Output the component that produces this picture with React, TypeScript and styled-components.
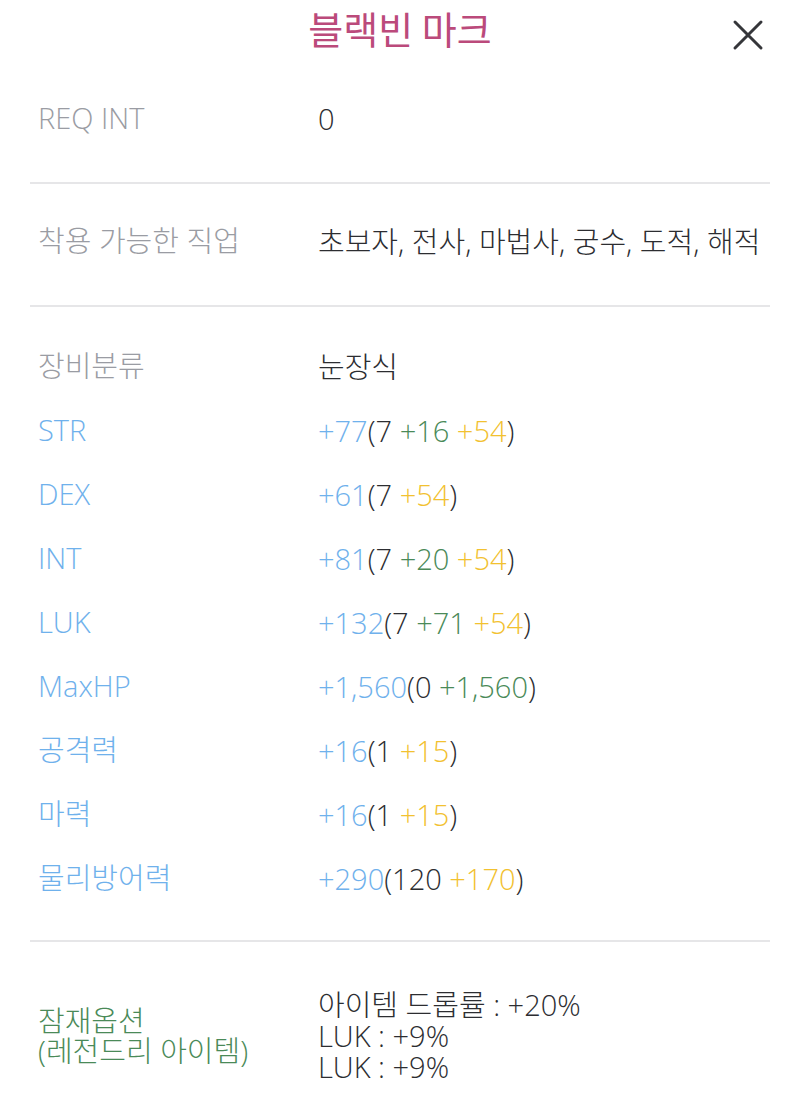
import React from "react";
import styled, { createGlobalStyle } from "styled-components";

const Global = createGlobalStyle`
  html, body { margin: 0; padding: 0; background: #ffffff; }
  body { font-family: "Open Sans", "Noto Sans CJK KR", sans-serif; -webkit-font-smoothing: antialiased; }
`;

const Page = styled.div`
  width: 800px;
  min-height: 1114px;
  box-sizing: border-box;
  padding: 0 30px;
  background: #fff;
`;

const Header = styled.header`
  position: relative;
  height: 61px;
  display: flex;
  align-items: center;
  justify-content: center;
`;

const Title = styled.h1`
  margin: 0 0 6px;
  font-family: "Noto Sans CJK KR", sans-serif;
  font-size: 38px;
  font-weight: 400;
  color: #bb4a7b;
  line-height: 1;
`;

const Close = styled.button`
  position: absolute;
  right: 4px;
  top: 17px;
  width: 36px;
  height: 36px;
  padding: 0;
  border: 0;
  background: transparent;
  display: flex;
  align-items: center;
  justify-content: center;
  cursor: pointer;
`;

const Section = styled.section<{ $top: number; $bottom: number; $last?: boolean }>`
  padding: ${(p) => p.$top}px 0 ${(p) => p.$bottom}px;
  border-bottom: ${(p) => (p.$last ? "none" : "2px solid #e6e6e8")};
`;

const Row = styled.div<{ $h?: number }>`
  display: grid;
  grid-template-columns: 280px 1fr;
  align-items: center;
  padding-left: 8px;
  min-height: ${(p) => p.$h ?? 64}px;
  font-size: 29px;
  font-weight: 300;
  white-space: nowrap;
`;

const Label = styled.div<{ $tone: "grey" | "blue" | "green" }>`
  color: ${(p) =>
    p.$tone === "grey" ? "#9a9ca3" : p.$tone === "blue" ? "#6fb1ec" : "#4a8a58"};
  line-height: 30px;
`;

const Value = styled.div`
  color: #2c2d31;
  line-height: 31px;
`;

const Tone = styled.span<{ $c: "blue" | "green" | "yellow" | "dark" }>`
  color: ${(p) =>
    p.$c === "blue"
      ? "#6fb1ec"
      : p.$c === "green"
      ? "#4a8a58"
      : p.$c === "yellow"
      ? "#f2c130"
      : "#2c2d31"};
`;

type Part = { t: string; c: "blue" | "green" | "yellow" | "dark" };

const stats: { label: string; parts: Part[] }[] = [
  { label: "STR", parts: [{ t: "+77", c: "blue" }, { t: "(7 ", c: "dark" }, { t: "+16 ", c: "green" }, { t: "+54", c: "yellow" }, { t: ")", c: "dark" }] },
  { label: "DEX", parts: [{ t: "+61", c: "blue" }, { t: "(7 ", c: "dark" }, { t: "+54", c: "yellow" }, { t: ")", c: "dark" }] },
  { label: "INT", parts: [{ t: "+81", c: "blue" }, { t: "(7 ", c: "dark" }, { t: "+20 ", c: "green" }, { t: "+54", c: "yellow" }, { t: ")", c: "dark" }] },
  { label: "LUK", parts: [{ t: "+132", c: "blue" }, { t: "(7 ", c: "dark" }, { t: "+71 ", c: "green" }, { t: "+54", c: "yellow" }, { t: ")", c: "dark" }] },
  { label: "MaxHP", parts: [{ t: "+1,560", c: "blue" }, { t: "(0 ", c: "dark" }, { t: "+1,560", c: "green" }, { t: ")", c: "dark" }] },
  { label: "공격력", parts: [{ t: "+16", c: "blue" }, { t: "(1 ", c: "dark" }, { t: "+15", c: "yellow" }, { t: ")", c: "dark" }] },
  { label: "마력", parts: [{ t: "+16", c: "blue" }, { t: "(1 ", c: "dark" }, { t: "+15", c: "yellow" }, { t: ")", c: "dark" }] },
  { label: "물리방어력", parts: [{ t: "+290", c: "blue" }, { t: "(120 ", c: "dark" }, { t: "+170", c: "yellow" }, { t: ")", c: "dark" }] },
];

export default function App() {
  return (
    <>
      <Global />
      <Page>
        <Header>
          <Title>블랙빈 마크</Title>
          <Close aria-label="닫기">
            <svg width="32" height="32" viewBox="0 0 32 32" fill="none">
              <path d="M3 3 L29 29 M29 3 L3 29" stroke="#35363a" strokeWidth="3" strokeLinecap="round" />
            </svg>
          </Close>
        </Header>

        <Section $top={25} $bottom={32}>
          <Row>
            <Label $tone="grey">REQ INT</Label>
            <Value>0</Value>
          </Row>
        </Section>

        <Section $top={25} $bottom={32}>
          <Row>
            <Label $tone="grey">착용 가능한 직업</Label>
            <Value>초보자, 전사, 마법사, 궁수, 도적, 해적</Value>
          </Row>
        </Section>

        <Section $top={27} $bottom={30}>
          <Row>
            <Label $tone="grey">장비분류</Label>
            <Value>눈장식</Value>
          </Row>
          {stats.map((s) => (
            <Row key={s.label}>
              <Label $tone="blue">{s.label}</Label>
              <Value>
                {s.parts.map((p, i) => (
                  <Tone key={i} $c={p.c}>
                    {p.t}
                  </Tone>
                ))}
              </Value>
            </Row>
          ))}
        </Section>

        <Section $top={47} $bottom={28} $last>
          <Row>
            <Label $tone="green">
              잠재옵션
              <br />
              (레전드리 아이템)
            </Label>
            <Value>
              아이템 드롭률 : +20%
              <br />
              LUK : +9%
              <br />
              LUK : +9%
            </Value>
          </Row>
        </Section>
      </Page>
    </>
  );
}
